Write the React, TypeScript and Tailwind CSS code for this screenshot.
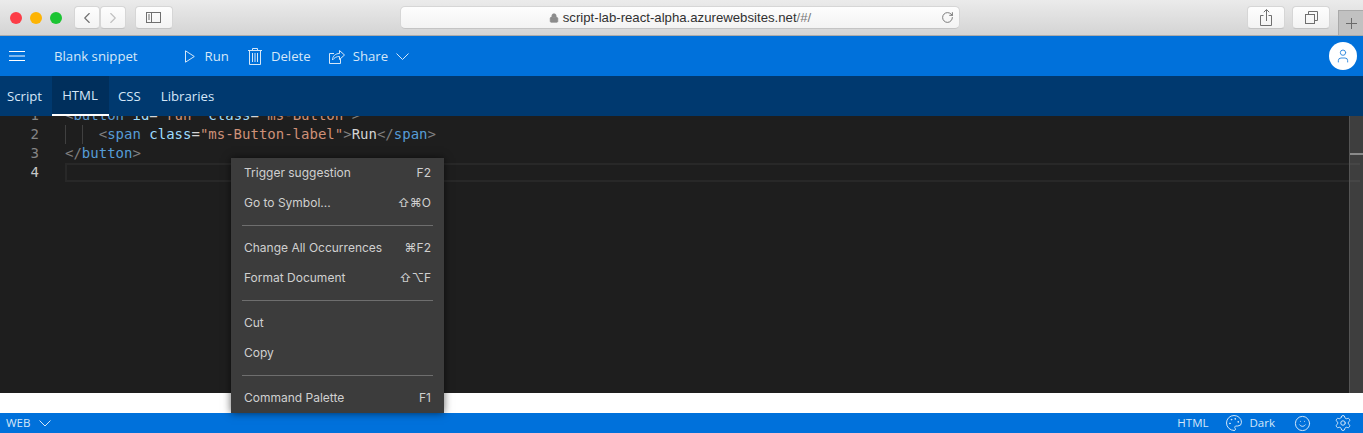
import { ChevronLeft, ChevronRight, Palette, RotateCw, Settings, Smile, User, Lock } from 'lucide-react';

const ui = 'font-["Open_Sans",sans-serif]';

function ToolbarButton({ className, children }: { className: string; children?: React.ReactNode }) {
  return (
    <div className={`h-[23px] flex items-center justify-center rounded-[4px] bg-gradient-to-b from-[#fdfdfd] to-[#f3f3f3] border border-[#d6d6d6] border-b-[#c4c4c4] ${className}`}>
      {children}
    </div>
  );
}

function Browser() {
  return (
    <div className="h-[36px] flex items-center pl-[10px] bg-gradient-to-b from-[#ebebeb] to-[#d4d4d4] border-b border-[#ababab] shrink-0 relative">
      <div className="w-3 h-3 rounded-full bg-[#fc3d47]" />
      <div className="w-3 h-3 rounded-full bg-[#fdb404] ml-2" />
      <div className="w-3 h-3 rounded-full bg-[#1cc433] ml-2" />
      <ToolbarButton className="w-[26px] ml-[12px]">
        <ChevronLeft size={18} strokeWidth={1.5} className="text-[#6f6f6f]" />
      </ToolbarButton>
      <ToolbarButton className="w-[26px]">
        <ChevronRight size={18} strokeWidth={1.5} className="text-[#c0c0c0]" />
      </ToolbarButton>
      <ToolbarButton className="w-[38px] ml-[9px]">
        <svg width="16" height="13" viewBox="0 0 16 13" fill="none" stroke="#6f6f6f">
          <rect x="0.5" y="1.5" width="14" height="10" />
          <path d="M5.5 1.5v10M2 4h2M2 6h2M2 8h2" />
        </svg>
      </ToolbarButton>
      <ToolbarButton className="w-[560px] ml-[227px] relative rounded-[5px]">
        <Lock size={10} fill="#8c8c8c" className="text-[#8c8c8c] mr-[4px]" />
        <span className='font-["Liberation_Sans",sans-serif] text-[13.2px] text-[#303030]'>
          script-lab-react-alpha.azurewebsites.net<span className="text-[#777]">/#/</span>
        </span>
        <RotateCw size={13} strokeWidth={1.6} className="text-[#6a6a6a] absolute right-[5px] top-[4px]" />
      </ToolbarButton>
      <ToolbarButton className="w-[38px] ml-[287px]">
        <svg width="13" height="17" viewBox="0 0 13 17" fill="none" stroke="#6f6f6f">
          <path d="M3.5 6.5h-3v10h11v-10h-3M6.5 12V0.8M3.800 3.200l2.700-2.700 2.700 2.700" />
        </svg>
      </ToolbarButton>
      <ToolbarButton className="w-[38px] ml-[7px]">
        <svg width="13" height="13" viewBox="0 0 13 13" fill="none" stroke="#6f6f6f">
          <rect x="0.5" y="3.5" width="9" height="9" />
          <path d="M3.500 3.500v-3h9v9h-3" />
        </svg>
      </ToolbarButton>
      <div className="absolute right-0 top-[10px] w-[25px] h-[26px] bg-[#c1c1c1] border border-[#a9a9a9] border-r-0 flex items-center justify-center">
        <svg width="11" height="11" viewBox="0 0 11 11" stroke="#6a6a6a"><path d="M5.500 0v11M0 5.500h11" /></svg>
      </div>
    </div>
  );
}

function Header() {
  return (
    <div className={`h-[40px] bg-[#0071db] flex items-center text-[#d5e7f8] text-[13.2px] shrink-0 ${ui}`}>
      <svg width="16" height="10" viewBox="0 0 16 10" stroke="#ffffff" className="ml-[9px]">
        <path d="M0 .5h16M0 5h16M0 9.500h16" />
      </svg>
      <span className="ml-[29px] pt-[2px]">Blank snippet</span>
      <svg width="10" height="13" viewBox="0 0 10 13" fill="none" stroke="currentColor" className="ml-[47px]">
        <path d="M.5.800v11.400L9.300 6.500z" />
      </svg>
      <span className="ml-[10px] pt-[2px]">Run</span>
      <svg width="14" height="17" viewBox="0 0 14 17" fill="none" stroke="currentColor" className="ml-[19px]">
        <path d="M0 2.500h14M4.500 2.500V.5h5v2M1.500 2.500v14h11v-14M4.500 5v9M7 5v9M9.500 5v9" />
      </svg>
      <span className="ml-[9px] pt-[2px]">Delete</span>
      <svg width="16" height="15" viewBox="0 0 16 15" fill="none" stroke="currentColor" className="ml-[18px]">
        <path d="M5 4.500H.5v10h11V10M3.500 11c0-4 3-6.500 7-6.500V1.500l5 4.500-5 4.500V7.500c-3 0-5 1-7 3.500z" />
      </svg>
      <span className="ml-[8px] pt-[2px]">Share</span>
      <svg width="13" height="7" viewBox="0 0 13 7" fill="none" stroke="currentColor" className="ml-[8px]">
        <path d="M.5.500l6 6 6-6" />
      </svg>
      <div className="ml-auto mr-[6px] w-7 h-7 rounded-full bg-white flex items-center justify-center">
        <User size={16} strokeWidth={1.5} className="text-[#3a8fe0]" />
      </div>
    </div>
  );
}

function Tabs() {
  return (
    <div className={`h-[40px] bg-[#00396f] flex text-[#d5e7f8] text-[13.2px] shrink-0 ${ui}`}>
      <div className="w-[52px] pl-[7px] pt-[1px] flex items-center">Script</div>
      <div className="w-[57px] justify-center bg-[#002f5c] border-b-2 border-white pt-[2px] pr-[1px] flex items-center">HTML</div>
      <div className="pl-[9px] pr-[10px] pt-[1px] flex items-center">CSS</div>
      <div className="pl-[10px] pt-[1px] flex items-center">Libraries</div>
    </div>
  );
}

function CodeLine({ n, active, children }: { n: number; active?: boolean; children?: React.ReactNode }) {
  return (
    <div className="h-[19px] flex items-center relative">
      <div className={`w-[39px] text-right shrink-0 ${active ? 'text-[#c6c6c6]' : 'text-[#858585]'}`}>{n}</div>
      <div className="ml-[26px] whitespace-pre text-[#d4d4d4]">{children}</div>
    </div>
  );
}

const Tag = ({ children }: { children: React.ReactNode }) => <span className="text-[#569cd6]">{children}</span>;
const Punct = ({ children }: { children: React.ReactNode }) => <span className="text-[#808080]">{children}</span>;
const Attr = ({ children }: { children: React.ReactNode }) => <span className="text-[#9cdcfe]">{children}</span>;
const Str = ({ children }: { children: React.ReactNode }) => <span className="text-[#ce9178]">{children}</span>;

function Editor() {
  return (
    <div className='h-[277px] bg-[#1e1e1e] overflow-hidden relative shrink-0 font-["DejaVu_Sans_Mono",monospace] text-[14px]'>
      {/* current line outline + scrollbar */}
      <div className="absolute left-[65px] right-[3px] top-[47px] h-[19px] border-y-2 border-l-2 border-[#282828]" />
      <div className="absolute right-0 top-0 bottom-0 w-[14px] bg-white/[0.14] border-l border-[#555]">
        <div className="h-[2px] mt-[37px] bg-[#8a8a8a]" />
      </div>
      <div className="absolute left-[65px] top-[9px] w-px h-[19px] bg-[#404040]" />
      <div className="absolute left-[82px] top-[9px] w-px h-[19px] bg-[#404040]" />
      <div className="mt-[-10px]">
        <CodeLine n={1}>
          <Punct>&lt;</Punct><Tag>button</Tag> <Attr>id</Attr>=<Str>"run"</Str> <Attr>class</Attr>=<Str>"ms-Button"</Str><Punct>&gt;</Punct>
        </CodeLine>
        <CodeLine n={2}>
          {'    '}<Punct>&lt;</Punct><Tag>span</Tag> <Attr>class</Attr>=<Str>"ms-Button-label"</Str><Punct>&gt;</Punct>Run<Punct>&lt;/</Punct><Tag>span</Tag><Punct>&gt;</Punct>
        </CodeLine>
        <CodeLine n={3}>
          <Punct>&lt;/</Punct><Tag>button</Tag><Punct>&gt;</Punct>
        </CodeLine>
        <CodeLine n={4} active />
      </div>
    </div>
  );
}

function Item({ label, keys }: { label: string; keys?: string }) {
  return (
    <div className="h-[30px] flex items-center justify-between pl-[13px] pr-[13px]">
      <span>{label}</span>
      <span>{keys}</span>
    </div>
  );
}

const Sep = () => <div className="h-px bg-[#6e6e6e] mx-[11px] my-[7px]" />;

function ContextMenu() {
  return (
    <div className='absolute left-[231px] top-[158px] w-[213px] h-[255px] overflow-hidden bg-[#3c3c3c] text-[#d0d0d0] text-[12px] shadow-[0_0_8px_rgba(0,0,0,0.6)] font-["Inter","Noto_Sans_CJK_SC",sans-serif]'>
      <Item label="Trigger suggestion" keys="F2" />
      <Item label="Go to Symbol..." keys="⇧⌘O" />
      <Sep />
      <Item label="Change All Occurrences" keys="⌘F2" />
      <Item label="Format Document" keys="⇧⌥F" />
      <Sep />
      <Item label="Cut" />
      <Item label="Copy" />
      <Sep />
      <Item label="Command Palette" keys="F1" />
    </div>
  );
}

function StatusBar() {
  return (
    <div className={`h-[20px] bg-[#0071db] flex items-center text-[#d5e7f8] text-[11.5px] shrink-0 ${ui}`}>
      <span className="ml-[6px]">WEB</span>
      <svg width="12" height="7" viewBox="0 0 12 7" fill="none" stroke="currentColor" className="ml-[9px]">
        <path d="M.5.500l5.500 5.500 5.500-5.500" />
      </svg>
      <span className="ml-auto">HTML</span>
      <Palette size={18} strokeWidth={1.3} className="ml-[16px]" />
      <span className="ml-[7px]">Dark</span>
      <Smile size={17} strokeWidth={1.4} className="ml-[19px]" />
      <Settings size={18} strokeWidth={1.3} className="ml-[23px] mr-[11px]" />
    </div>
  );
}

export default function App() {
  return (
    <div className="w-[1363px] h-[433px] flex flex-col relative overflow-hidden bg-white">
      <Browser />
      <Header />
      <Tabs />
      <Editor />
      <div className="h-[20px] bg-white shrink-0" />
      <StatusBar />
      <ContextMenu />
    </div>
  );
}
